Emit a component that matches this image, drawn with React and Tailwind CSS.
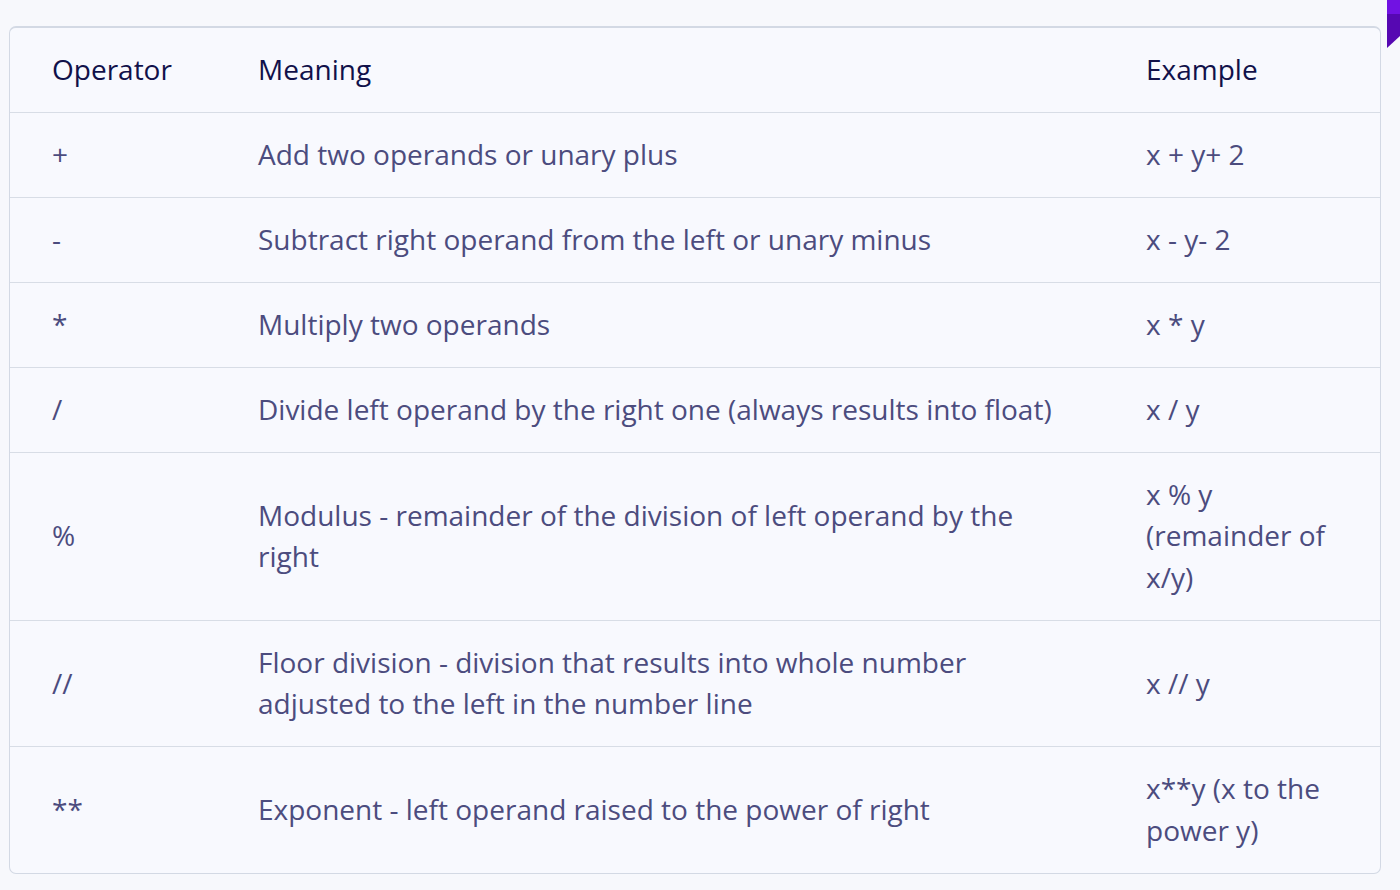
const rows = [
  { op: "+", meaning: "Add two operands or unary plus", example: "x + y+ 2" },
  { op: "-", meaning: "Subtract right operand from the left or unary minus", example: "x - y- 2" },
  { op: "*", meaning: "Multiply two operands", example: "x * y" },
  { op: "/", meaning: "Divide left operand by the right one (always results into float)", example: "x / y" },
  { op: "%", meaning: "Modulus - remainder of the division of left operand by the right", example: "x % y (remainder of x/y)" },
  { op: "//", meaning: "Floor division - division that results into whole number adjusted to the left in the number line", example: "x // y" },
  { op: "**", meaning: "Exponent - left operand raised to the power of right", example: "x**y (x to the power y)" },
];

export default function App() {
  return (
    <div
      className="relative min-h-screen bg-[#f7f8fc] pt-[26px] pl-[9px] pr-[19px]"
      style={{ fontFamily: "'Open Sans', 'Noto Sans', sans-serif" }}
    >
      {/* purple corner */}
      <div className="absolute right-0 top-0 w-[13px] h-[48px]">
        <div className="h-[14px] bg-[#7112e3]" />
        <div
          className="h-[34px] bg-[#5608b2]"
          style={{ clipPath: "polygon(0 0, 100% 0, 100% 65%, 0 100%)" }}
        />
      </div>

      <div className="w-[1372px] overflow-hidden rounded-[7px] border border-t-2 border-[#d3d9e4] bg-[#f8f9fe]">
        <table className="w-full table-fixed border-collapse text-[28px] leading-[41.5px]">
          <colgroup>
            <col className="w-[206px]" />
            <col />
            <col className="w-[276px]" />
          </colgroup>
          <thead>
            <tr className="text-[#11114a]">
              <th className="h-[84px] pl-[42px] text-left font-normal">Operator</th>
              <th className="pl-[42px] pr-[48px] text-left font-normal">Meaning</th>
              <th className="pl-[42px] pr-[49px] text-left font-normal">Example</th>
            </tr>
          </thead>
          <tbody className="text-[#4c4c7e]">
            {rows.map((r) => (
              <tr key={r.op} className="border-t border-[#d8dde6]">
                <td className="pl-[42px] py-[21.25px] align-middle">{r.op}</td>
                <td className="pl-[42px] pr-[48px] py-[21.25px] align-middle">{r.meaning}</td>
                <td className="pl-[42px] pr-[49px] py-[21.25px] align-middle">{r.example}</td>
              </tr>
            ))}
          </tbody>
        </table>
      </div>
    </div>
  );
}
